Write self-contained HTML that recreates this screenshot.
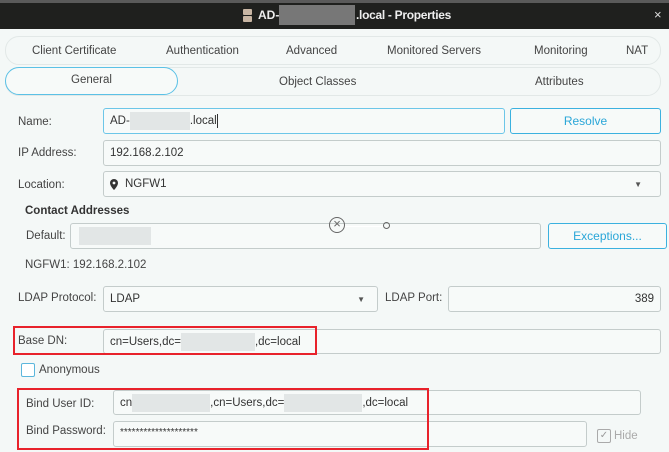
<!DOCTYPE html>
<html><head><meta charset="utf-8"><style>
*{box-sizing:border-box;margin:0;padding:0}
body{width:669px;height:452px;overflow:hidden;background:#f4f8f7;font-family:"Liberation Sans",sans-serif;font-size:11.5px;color:#3a3a3a;position:relative}
.a{position:absolute}
.f{position:absolute;border:1px solid #c4cccb;border-radius:3px;background:#f7faf9;padding-left:6px;display:flex;align-items:center;color:#333}
.l{position:absolute;color:#444}
.tab{position:absolute;color:#444;font-size:11.5px}
.btn{position:absolute;border:1px solid #3bb1df;border-radius:3px;color:#2aa6d8;display:flex;align-items:center;justify-content:center;font-size:12px;background:#f7faf9}
.blur{display:inline-block;background:#e2e6e6;height:18px}
.red{position:absolute;border:2px solid #e8222b}
</style></head><body>
<div class="a" style="left:0;top:0;width:669px;height:3px;background:#5a5a5a"></div>
<div class="a" style="left:0;top:3px;width:669px;height:26px;background:#1f201e"></div>
<div class="a" style="left:243px;top:9px;width:9px;height:6px;background:#c9b6a4;border-radius:1px"></div>
<div class="a" style="left:243px;top:16px;width:9px;height:6px;background:#c9b6a4;border-radius:1px"></div>
<div class="a" style="left:258px;top:8px;color:#eee;font-weight:bold;font-size:12px">AD-</div>
<div class="a" style="left:279px;top:5px;width:76px;height:20px;background:#777"></div>
<div class="a" style="left:356px;top:8px;color:#eee;font-weight:bold;font-size:12px;letter-spacing:-0.3px">.local - Properties</div>
<div class="a" style="left:654px;top:7px;color:#ddd;font-size:13px">×</div>

<div class="a" style="left:5px;top:36px;width:656px;height:29px;border:1px solid #e2e8e7;border-radius:14px"></div>
<div class="a" style="left:5px;top:67px;width:656px;height:29px;border:1px solid #e2e8e7;border-radius:14px"></div>
<div class="tab" style="left:32px;top:45px">Client Certificate</div>
<div class="tab" style="left:166px;top:45px">Authentication</div>
<div class="tab" style="left:286px;top:45px">Advanced</div>
<div class="tab" style="left:387px;top:45px">Monitored Servers</div>
<div class="tab" style="left:534px;top:45px">Monitoring</div>
<div class="tab" style="left:626px;top:45px">NAT</div>
<div class="a" style="left:5px;top:67px;width:173px;height:28px;border:1px solid #5bc1e6;border-radius:14px;background:#f7faf9"></div>
<div class="tab" style="left:71px;top:74px">General</div>
<div class="tab" style="left:279px;top:76px">Object Classes</div>
<div class="tab" style="left:535px;top:76px">Attributes</div>

<div class="l" style="left:18px;top:116px">Name:</div>
<div class="f" style="left:103px;top:108px;width:402px;height:26px;border-color:#6cc6e8">AD-<span class="blur" style="width:60px"></span>.local<span style="border-left:1px solid #333;height:14px"></span></div>
<div class="btn" style="left:510px;top:108px;width:151px;height:26px">Resolve</div>
<div class="l" style="left:18px;top:147px">IP Address:</div>
<div class="f" style="left:103px;top:140px;width:558px;height:26px">192.168.2.102</div>
<div class="l" style="left:18px;top:179px">Location:</div>
<div class="f" style="left:103px;top:171px;width:558px;height:26px"><svg width="8" height="11" viewBox="0 0 8 11" style="margin-right:7px"><path d="M4 0a4 4 0 0 1 4 4c0 3-4 7-4 7S0 7 0 4a4 4 0 0 1 4-4z" fill="#333"/><circle cx="4" cy="4" r="1.4" fill="#f7faf9"/></svg>NGFW1<span style="position:absolute;right:18px;font-size:8px;color:#555">▼</span></div>
<div class="l" style="left:25px;top:205px;font-weight:bold;color:#333">Contact Addresses</div>
<div class="l" style="left:26px;top:230px">Default:</div>
<div class="f" style="left:70px;top:223px;width:471px;height:26px"><span class="blur" style="width:72px;margin-left:2px"></span></div>
<div class="a" style="left:329px;top:217px;width:16px;height:16px;border:1.5px solid #666;border-radius:50%;font-size:13px;line-height:12px;text-align:center;color:#666">×</div>
<div class="a" style="left:345px;top:226px;width:38px;height:1px;background:#fff"></div>
<div class="a" style="left:383px;top:222px;width:7px;height:7px;border:1px solid #666;border-radius:50%"></div>
<div class="btn" style="left:548px;top:223px;width:119px;height:26px">Exceptions...</div>
<div class="l" style="left:25px;top:259px">NGFW1: 192.168.2.102</div>

<div class="l" style="left:18px;top:292px">LDAP Protocol:</div>
<div class="f" style="left:103px;top:286px;width:275px;height:26px">LDAP<span style="position:absolute;right:12px;font-size:8px;color:#555">▼</span></div>
<div class="l" style="left:385px;top:292px">LDAP Port:</div>
<div class="f" style="left:448px;top:286px;width:213px;height:26px;justify-content:flex-end;padding-right:6px">389</div>

<div class="l" style="left:18px;top:335px">Base DN:</div>
<div class="f" style="left:103px;top:329px;width:558px;height:25px">cn=Users,dc=<span class="blur" style="width:74px"></span>,dc=local</div>
<div class="red" style="left:13px;top:326px;width:304px;height:29px"></div>

<div class="a" style="left:21px;top:363px;width:14px;height:14px;border:1px solid #5bb6dc;border-radius:2px;background:#fff"></div>
<div class="l" style="left:39px;top:364px">Anonymous</div>

<div class="l" style="left:26px;top:398px">Bind User ID:</div>
<div class="f" style="left:113px;top:390px;width:528px;height:25px">cn<span class="blur" style="width:78px"></span>,cn=Users,dc=<span class="blur" style="width:78px"></span>,dc=local</div>
<div class="l" style="left:26px;top:425px">Bind Password:</div>
<div class="f" style="left:113px;top:421px;width:474px;height:26px;align-items:flex-start;padding-top:5px;font-size:10px">********************</div>
<div class="a" style="left:597px;top:429px;width:14px;height:14px;border:1px solid #aaa;border-radius:2px;font-size:10px;line-height:12px;text-align:center;color:#999">✓</div>
<div class="l" style="left:614px;top:430px;color:#aaa">Hide</div>
<div class="red" style="left:17px;top:388px;width:412px;height:62px"></div>
</body></html>
